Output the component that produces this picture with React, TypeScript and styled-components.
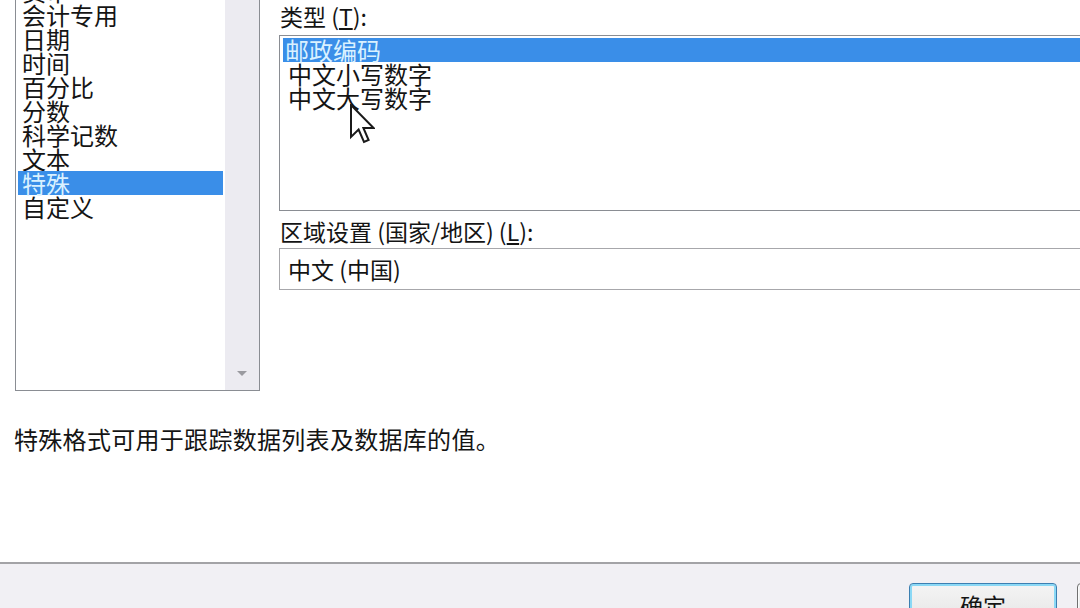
import React from "react";
import styled, { createGlobalStyle } from "styled-components";

const Global = createGlobalStyle`
  html, body { margin: 0; padding: 0; background: #ffffff; overflow: hidden; }
  body { font-family: "Noto Sans CJK SC", "Liberation Sans", sans-serif; color: #141414; }
  u { text-decoration: underline; text-underline-offset: 2px; }
`;

const Screen = styled.div`
  position: relative;
  width: 1080px;
  height: 608px;
  overflow: hidden;
  display: flex;
  flex-direction: column;
  background: #ffffff;
`;

const Body = styled.div`
  height: 562px;
  flex-shrink: 0;
  display: flex;
  flex-direction: column;
  background: #ffffff;
`;

const Upper = styled.div`
  display: flex;
  align-items: flex-start;
  gap: 19px;
  padding-left: 15px;
`;

const CategoryBox = styled.div`
  flex-shrink: 0;
  width: 243px;
  height: 390px;
  border: 1px solid #8a8d93;
  border-top: none;
  display: flex;
  overflow: hidden;
  background: #ffffff;
`;

const ItemColumn = styled.div`
  flex: 1;
  padding: 0 2px;
  overflow: hidden;
`;

const Items = styled.div`
  margin-top: -21px;
  display: flex;
  flex-direction: column;
`;

const Item = styled.div<{ $selected?: boolean; $indent?: number }>`
  height: 24px;
  line-height: 24px;
  font-size: 24px;
  padding-left: ${(p) => p.$indent ?? 4}px;
  white-space: nowrap;
  background: ${(p) => (p.$selected ? "#3a8ee8" : "transparent")};
  color: ${(p) => (p.$selected ? "#d9f1ff" : "#141414")};
`;

const Scrollbar = styled.div`
  width: 34px;
  background: #ecebf1;
  display: flex;
  flex-direction: column;
  justify-content: flex-end;
  align-items: center;
  padding-bottom: 14px;
`;

const DownArrow = styled.div`
  width: 0;
  height: 0;
  border-left: 5px solid transparent;
  border-right: 5px solid transparent;
  border-top: 5px solid #9a9aa0;
`;

const RightCol = styled.div`
  flex-shrink: 0;
  width: 820px;
  display: flex;
  flex-direction: column;
`;

const Label = styled.div<{ $top: number }>`
  margin-top: ${(p) => p.$top}px;
  height: 24px;
  line-height: 24px;
  font-size: 23px;
  white-space: nowrap;
  padding-left: 1px;
`;

const TypeList = styled.div`
  margin-top: 7px;
  height: 172px;
  border: 1px solid #8a8d93;
  border-right: none;
  padding: 2px 0 0 3px;
  background: #ffffff;
`;

const Dropdown = styled.div`
  margin-top: 5px;
  height: 40px;
  border: 1px solid #a7a7ab;
  border-right: none;
  display: flex;
  align-items: center;
  padding-left: 8px;
  font-size: 23px;
  background: #ffffff;
`;

const Description = styled.div`
  margin-top: 36px;
  padding-left: 14px;
  font-size: 24px;
  line-height: 24px;
  letter-spacing: 0.3px;
`;

const Footer = styled.div`
  flex: 1;
  border-top: 2px solid #a3a3a6;
  background: #f1f0f4;
  display: flex;
  justify-content: flex-end;
  gap: 20px;
  padding-top: 19px;
  margin-right: -145px;
`;

const Button = styled.div<{ $default?: boolean }>`
  flex-shrink: 0;
  width: 146px;
  height: 40px;
  border: 1px solid ${(p) => (p.$default ? "#3c7fb1" : "#707070")};
  border-radius: 4px;
  box-shadow: ${(p) => (p.$default ? "inset 0 0 0 2px #8ad8f5" : "inset 0 0 0 1px #fbfbfb")};
  background: linear-gradient(#f4f4f4, #ebebeb 50%, #dddddd 51%, #cfcfcf);
  display: flex;
  justify-content: center;
  padding-top: 9px;
  font-size: 23px;
  line-height: 24px;
  color: #141414;
`;

const Cursor = styled.svg`
  position: absolute;
  left: 350px;
  top: 104px;
  width: 25px;
  height: 40px;
`;

const categories = ["货币", "会计专用", "日期", "时间", "百分比", "分数", "科学记数", "文本", "特殊", "自定义"];
const types = ["邮政编码", "中文小写数字", "中文大写数字"];

export default function App() {
  return (
    <>
      <Global />
      <Screen>
        <Body>
          <Upper>
            <CategoryBox>
              <ItemColumn>
                <Items>
                  {categories.map((c) => (
                    <Item key={c} $selected={c === "特殊"}>
                      {c}
                    </Item>
                  ))}
                </Items>
              </ItemColumn>
              <Scrollbar>
                <DownArrow />
              </Scrollbar>
            </CategoryBox>
            <RightCol>
              <Label $top={4}>
                类型 (<u>T</u>):
              </Label>
              <TypeList>
                {types.map((t, i) => (
                  <Item key={t} $selected={i === 0} $indent={i === 0 ? 2 : 5}>
                    {t}
                  </Item>
                ))}
              </TypeList>
              <Label $top={8}>
                区域设置 (国家/地区) (<u>L</u>):
              </Label>
              <Dropdown>中文 (中国)</Dropdown>
            </RightCol>
          </Upper>
          <Description>特殊格式可用于跟踪数据列表及数据库的值。</Description>
        </Body>
        <Footer>
          <Button $default>确定</Button>
          <Button>取消</Button>
        </Footer>
        <Cursor viewBox="0 0 12.5 20">
          <path
            d="M0.5 0.5 L0.5 16.5 L4.3 12.8 L7 19 L9.3 18 L6.7 12 L11.8 12 Z"
            fill="#ffffff"
            stroke="#1a1a1a"
            strokeWidth="1"
            strokeLinejoin="miter"
          />
        </Cursor>
      </Screen>
    </>
  );
}
